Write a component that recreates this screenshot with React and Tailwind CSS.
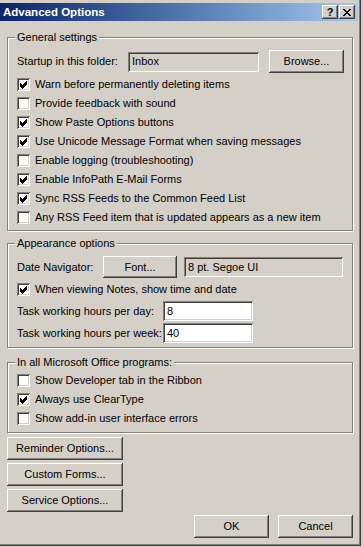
const raised =
  'shadow-[inset_-1px_-1px_#404040,inset_1px_1px_#ffffff,inset_-2px_-2px_#808080,inset_2px_2px_#d4d0c8]'
const sunken =
  'shadow-[inset_1px_1px_#808080,inset_-1px_-1px_#ffffff,inset_2px_2px_#404040,inset_-2px_-2px_#d4d0c8]'

const general = [
  { label: 'Warn before permanently deleting items', on: true },
  { label: 'Provide feedback with sound', on: false },
  { label: 'Show Paste Options buttons', on: true },
  { label: 'Use Unicode Message Format when saving messages', on: true },
  { label: 'Enable logging (troubleshooting)', on: false },
  { label: 'Enable InfoPath E-Mail Forms', on: true },
  { label: 'Sync RSS Feeds to the Common Feed List', on: true },
  { label: 'Any RSS Feed item that is updated appears as a new item', on: false },
]

const office = [
  { label: 'Show Developer tab in the Ribbon', on: false },
  { label: 'Always use ClearType', on: true },
  { label: 'Show add-in user interface errors', on: false },
]

function Check({ label, on }) {
  return (
    <div className="h-[19px] flex items-center pl-[9px]">
      <div className={`w-[13px] h-[13px] bg-white flex-shrink-0 ${sunken}`}>
        {on && (
          <svg width="13" height="13" viewBox="0 0 13 13" shapeRendering="crispEdges">
            <polygon points="3,5 5,7 9,3 10,3 10,6 5,11 3,9" fill="#000" />
          </svg>
        )}
      </div>
      <span className="ml-[5px] leading-[13px] whitespace-nowrap">{label}</span>
    </div>
  )
}

function Button({ children, className = '' }) {
  return (
    <div
      className={`h-[23px] bg-[#d4d0c8] flex items-center justify-center leading-[13px] flex-shrink-0 ${raised} ${className}`}
    >
      {children}
    </div>
  )
}

function Field({ children, className = '' }) {
  return (
    <div className={`h-[20px] flex items-center pl-[4px] leading-[13px] flex-shrink-0 ${sunken} ${className}`}>
      {children}
    </div>
  )
}

function Group({ title, className = '', children }) {
  return (
    <div
      className={`relative border border-[#808080] shadow-[1px_1px_0_#ffffff,inset_1px_1px_0_#ffffff] ${className}`}
    >
      <span className="absolute top-[-7px] left-[7px] px-[2px] bg-[#d4d0c8] leading-[13px] whitespace-nowrap">
        {title}
      </span>
      {children}
    </div>
  )
}

export default function App() {
  return (
    <div className="w-[363px] h-[547px] bg-[#d4d0c8] overflow-hidden text-[11px] text-black font-['Liberation_Sans',Arial,sans-serif]">
      <div className="w-[361px] h-[546px] pt-[3px] border-r border-b border-[#404040] shadow-[inset_-1px_-1px_#808080]">
        {/* title bar */}
        <div className="h-[18px] w-[358px] flex items-center pl-[3px] pr-[3px] bg-linear-to-r from-[#0a246a] to-[#a6caf0]">
          <span className="text-white font-bold text-[11.5px] leading-[13px] flex-1">Advanced Options</span>
          <div className={`w-[16px] h-[14px] bg-[#d4d0c8] flex items-center justify-center font-bold text-[11px] leading-[11px] ${raised}`}>
            ?
          </div>
          <div className={`w-[16px] h-[14px] ml-[1px] bg-[#d4d0c8] flex items-center justify-center ${raised}`}>
            <svg width="8" height="7" viewBox="0 0 8 7" shapeRendering="crispEdges">
              <path d="M0 0h2v1h-2zM6 0h2v1h-2zM1 1h2v1h-2zM5 1h2v1h-2zM2 2h4v1h-4zM3 3h2v1h-2zM2 4h4v1h-4zM1 5h2v1h-2zM5 5h2v1h-2zM0 6h2v1h-2zM6 6h2v1h-2z" fill="#000" />
            </svg>
          </div>
        </div>

        <div className="px-[7px]">
          <Group title="General settings" className="w-[346px] mt-[16px] pt-[12px] pb-[3px]">
            <div className="h-[23px] flex items-center pl-[9px]">
              <span className="w-[111px] leading-[13px] whitespace-nowrap">Startup in this folder:</span>
              <Field className="w-[131px] bg-[#d4d0c8]">Inbox</Field>
              <Button className="w-[75px] ml-[10px]">Browse...</Button>
            </div>
            <div className="mt-[2px]">
              {general.map((c) => (
                <Check key={c.label} {...c} />
              ))}
            </div>
          </Group>

          <Group title="Appearance options" className="w-[346px] mt-[12px] pt-[12px] pb-[4px]">
            <div className="h-[22px] flex items-center pl-[9px]">
              <span className="w-[86px] leading-[13px] whitespace-nowrap">Date Navigator:</span>
              <Button className="w-[74px] !h-[22px]">Font...</Button>
              <Field className="w-[159px] ml-[7px] bg-[#d4d0c8]">8 pt. Segoe UI</Field>
            </div>
            <div className="mt-[2px]">
              <Check label="When viewing Notes, show time and date" on />
            </div>
            <div className="h-[20px] mt-[2px] flex items-center pl-[9px]">
              <span className="w-[146px] leading-[13px] whitespace-nowrap">Task working hours per day:</span>
              <Field className="w-[90px] bg-white">8</Field>
            </div>
            <div className="h-[20px] mt-[2px] flex items-center pl-[9px]">
              <span className="w-[146px] leading-[13px] whitespace-nowrap">Task working hours per week:</span>
              <Field className="w-[90px] bg-white">40</Field>
            </div>
          </Group>

          <Group title="In all Microsoft Office programs:" className="w-[346px] mt-[14px] pt-[8px] pb-[4px]">
            {office.map((c) => (
              <Check key={c.label} {...c} />
            ))}
          </Group>

          <div className="mt-[4px] flex flex-col gap-[3px]">
            <Button className="w-[116px]">Reminder Options...</Button>
            <Button className="w-[116px]">Custom Forms...</Button>
            <Button className="w-[116px]">Service Options...</Button>
          </div>

          <div className="mt-[3px] w-[346px] flex justify-end gap-[9px]">
            <Button className="w-[75px]">OK</Button>
            <Button className="w-[75px]">Cancel</Button>
          </div>
        </div>
      </div>
    </div>
  )
}
